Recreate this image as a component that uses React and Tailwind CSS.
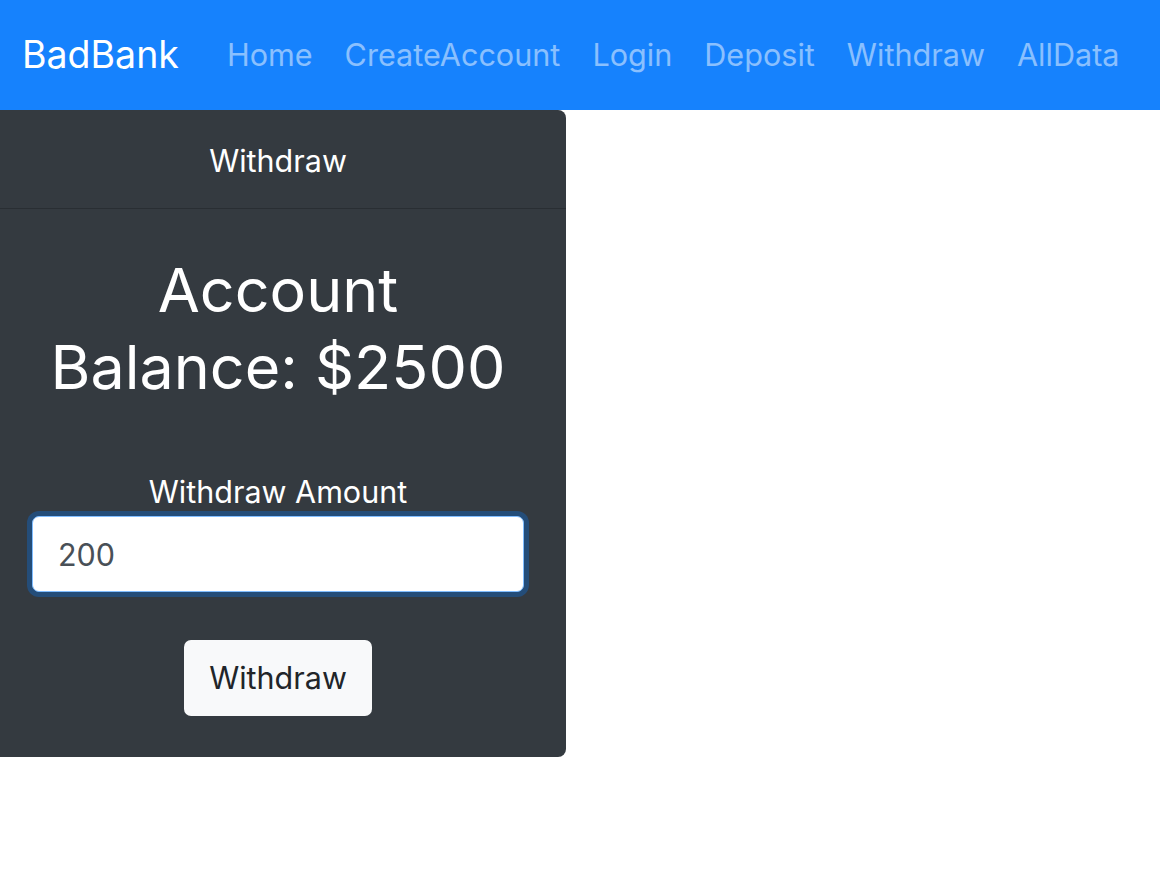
import React from "react";

const links = ["Home", "CreateAccount", "Login", "Deposit", "Withdraw", "AllData"];

function NavBar() {
  return (
    <nav className="flex h-[110px] items-center bg-[#1682fd] px-[22px]">
      <a className="mr-[32px] text-[37.5px] leading-[54px] text-white">BadBank</a>
      <ul className="flex items-center">
        {links.map((l) => (
          <li key={l}>
            <a className="block px-[16px] text-[30.6px] leading-[48px] text-white/50">{l}</a>
          </li>
        ))}
      </ul>
    </nav>
  );
}

function WithdrawCard() {
  return (
    <div className="-ml-[10px] w-[576px] overflow-hidden rounded-[8px] bg-[#343a40] text-white">
      <div className="border-b border-black/20 px-[40px] pt-[27px] pb-[23px] text-center text-[30.5px] leading-[48px]">
        Withdraw
      </div>
      <div className="px-[42px] pt-[43px] pb-[41px] text-center">
        <h2 className="mb-[62px] text-[61px] leading-[77px]">
          Account
          <br />
          Balance: $2500
        </h2>
        <label className="block text-[30.5px] leading-[48px]">Withdraw Amount</label>
        <input
          className="block h-[76px] w-full rounded-[7px] border border-[#80bdff] bg-white px-[25px] text-[30.5px] text-[#495057] shadow-[0_0_0_5px_rgba(0,123,255,0.3)] outline-none"
          defaultValue="200"
        />
        <div className="mt-[48px] flex justify-center">
          <button className="h-[76px] rounded-[7px] bg-[#f8f9fa] px-[25px] text-[30.5px] text-[#212529]">
            Withdraw
          </button>
        </div>
      </div>
    </div>
  );
}

export default function App() {
  return (
    <div className="min-h-[876px] bg-white font-['Inter',sans-serif]">
      <NavBar />
      <WithdrawCard />
    </div>
  );
}
